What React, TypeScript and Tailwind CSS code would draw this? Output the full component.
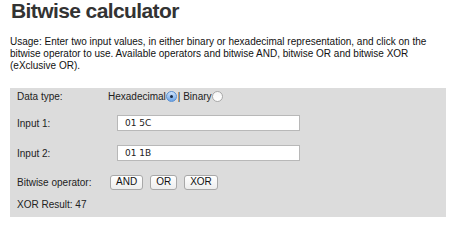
import { useState } from 'react'

function Radio({ checked }: { checked: boolean }) {
  return checked ? (
    <span className="inline-flex items-center justify-center w-[11px] h-[11px] rounded-full border border-[#5a8fd0] bg-gradient-to-b from-[#cfe3fa] to-[#6aa3e6]">
      <span className="w-[3px] h-[3px] rounded-full bg-[#1b2b44]" />
    </span>
  ) : (
    <span className="inline-block w-[11px] h-[11px] rounded-full border border-[#a9a9a9] bg-gradient-to-b from-[#f6f6f6] to-white" />
  )
}

function OpButton({ label }: { label: string }) {
  return (
    <button className="h-[15px] px-[5px] rounded-[3px] border border-[#a8a8a8] bg-gradient-to-b from-white to-[#ededed] text-[10px] leading-none text-[#111]">
      {label}
    </button>
  )
}

export default function App() {
  const [input1] = useState('01 5C')
  const [input2] = useState('01 1B')

  return (
    <div className="w-[474px] h-[244px] bg-white pl-[10px] pr-[28px] font-['Liberation_Sans',Arial,sans-serif] text-[#222]">
      <h1 className="pl-[1px] text-[21px] leading-[22px] font-bold text-[#333] tracking-[-0.6px]">
        Bitwise calculator
      </h1>
      <p className="mt-[14px] text-[10px] leading-[12px] text-[#111]">
        Usage: Enter two input values, in either binary or hexadecimal representation, and click on the
        bitwise operator to use. Available operators and bitwise AND, bitwise OR and bitwise XOR
        (eXclusive OR).
      </p>
      <div className="mt-[16px] bg-[#dcdcdc] px-[7px] pb-[7px] text-[10px]">
        <div className="flex items-center h-[16px]">
          <span className="w-[91px]">Data type:</span>
          <span className="flex items-center">
            Hexadecimal
            <Radio checked />
            <span className="ml-[1px]">| Binary</span>
            <Radio checked={false} />
          </span>
        </div>
        <div className="flex items-center h-[16px] mt-[11px]">
          <span className="w-[100px]">Input 1:</span>
          <input
            readOnly
            value={input1}
            className="w-[183px] h-[16px] bg-white border border-[#b8b8b8] px-[7px] text-[9px] font-['DejaVu_Sans',sans-serif] text-[#222] outline-none"
          />
        </div>
        <div className="flex items-center h-[16px] mt-[14px]">
          <span className="w-[100px]">Input 2:</span>
          <input
            readOnly
            value={input2}
            className="w-[183px] h-[16px] bg-white border border-[#b8b8b8] px-[7px] text-[9px] font-['DejaVu_Sans',sans-serif] text-[#222] outline-none"
          />
        </div>
        <div className="flex items-center h-[16px] mt-[13px]">
          <span className="w-[93px]">Bitwise operator:</span>
          <div className="flex gap-[7px]">
            <OpButton label="AND" />
            <OpButton label="OR" />
            <OpButton label="XOR" />
          </div>
        </div>
        <div className="flex items-center h-[12px] mt-[8px]">XOR Result: 47</div>
      </div>
    </div>
  )
}
